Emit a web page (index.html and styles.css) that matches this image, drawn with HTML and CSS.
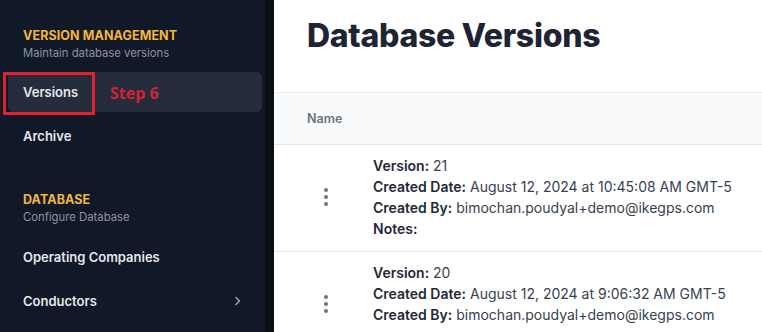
FILE: index.html
```html
<!DOCTYPE html>
<html lang="en">
<head>
    <meta charset="UTF-8">
    <meta name="viewport" content="width=device-width, initial-scale=1.0">
    <title>Database Versions</title>
    <link rel="stylesheet" href="styles.css">
</head>
<body>
    <div class="layout">
        <!-- Sidebar -->
        <aside class="sidebar">
            <div class="section">
                <div class="section-title">VERSION MANAGEMENT</div>
                <div class="section-sub">Maintain database versions</div>
                <ul class="nav">
                    <li class="nav-item active">
                        Versions
                        <span class="step-box"></span>
                        <span class="step-label">Step 6</span>
                    </li>
                    <li class="nav-item">Archive</li>
                </ul>
            </div>

            <div class="section section-db">
                <div class="section-title">DATABASE</div>
                <div class="section-sub">Configure Database</div>
                <ul class="nav">
                    <li class="nav-item">Operating Companies</li>
                    <li class="nav-item">
                        Conductors
                        <svg class="chevron" width="8" height="10" viewBox="0 0 8 10"><path d="M2 1.5 L5.5 5 L2 8.5" fill="none" stroke="#9ca3af" stroke-width="1.6" stroke-linecap="round" stroke-linejoin="round"/></svg>
                    </li>
                </ul>
            </div>
        </aside>
        <div class="divider"></div>

        <!-- Main content -->
        <main class="main">
            <h1 class="page-title">Database Versions</h1>

            <div class="table-head">Name</div>

            <div class="row">
                <div class="kebab"><span></span><span></span><span></span></div>
                <div class="details">
                    <div><b>Version:</b> 21</div>
                    <div><b>Created Date:</b> August 12, 2024 at 10:45:08 AM GMT-5</div>
                    <div><b>Created By:</b> bimochan.poudyal+demo@ikegps.com</div>
                    <div><b>Notes:</b></div>
                </div>
            </div>

            <div class="row">
                <div class="kebab"><span></span><span></span><span></span></div>
                <div class="details">
                    <div><b>Version:</b> 20</div>
                    <div><b>Created Date:</b> August 12, 2024 at 9:06:32 AM GMT-5</div>
                    <div><b>Created By:</b> bimochan.poudyal+demo@ikegps.com</div>
                </div>
            </div>
        </main>
    </div>
</body>
</html>
```

FILE: styles.css
```css
body {
    margin: 0;
    font-family: Inter, "Noto Sans", Arial, sans-serif;
    background-color: #ffffff;
    overflow: hidden;
}

.layout {
    display: flex;
    height: 332px;
    overflow: hidden;
}

/* Sidebar */
.sidebar {
    width: 265px;
    background-color: #111827;
    padding-top: 27px;
    box-sizing: border-box;
    flex-shrink: 0;
}

.divider {
    width: 9px;
    background-color: #0a0e17;
    flex-shrink: 0;
}

.section-title {
    padding-left: 23px;
    font-size: 12.5px;
    font-weight: 700;
    line-height: 18px;
    color: #f4b63a;
    letter-spacing: 0.1px;
}

.section-sub {
    padding-left: 23px;
    font-size: 11.3px;
    line-height: 16px;
    color: #8b93a1;
}

.section-db {
    margin-top: 35px;
}

.nav {
    list-style: none;
    margin: 11px 0 0 0;
    padding: 0;
}

.section-db .nav {
    margin-top: 12px;
}

.nav-item {
    position: relative;
    display: flex;
    align-items: center;
    height: 40px;
    margin: 0 3px 4px 8px;
    padding-left: 15px;
    padding-right: 20px;
    border-radius: 6px;
    font-size: 13px;
    font-weight: 600;
    color: #e5e7eb;
}

.nav-item.active {
    background-color: #252d3d;
}

.chevron {
    margin-left: auto;
}

/* Tutorial annotation over the active item */
.step-box {
    position: absolute;
    left: -5px;
    top: 0;
    width: 86px;
    height: 37px;
    border: 3px solid #e3202e;
}

.step-label {
    position: absolute;
    left: 102px;
    top: 10px;
    font-family: "Open Sans", "Noto Sans", sans-serif;
    font-size: 16px;
    font-weight: 700;
    color: #d42234;
}

/* Main */
.main {
    flex: 1;
    min-width: 0;
}

.page-title {
    margin: 0;
    height: 92px;
    box-sizing: border-box;
    padding: 15px 0 0 33px;
    font-size: 32px;
    line-height: 42px;
    font-weight: 800;
    color: #1e2433;
    letter-spacing: -0.3px;
}

.table-head {
    height: 53px;
    box-sizing: border-box;
    display: flex;
    align-items: center;
    padding-left: 33px;
    background-color: #f9fafb;
    border-top: 1px solid #eceef1;
    border-bottom: 1px solid #e5e7eb;
    font-size: 12.5px;
    font-weight: 600;
    color: #6b7280;
}

.row {
    display: flex;
    align-items: flex-start;
    min-height: 107px;
    box-sizing: border-box;
    padding: 10px 0 12px 0;
    border-bottom: 1px solid #e5e7eb;
}

.kebab {
    align-self: center;
    width: 99px;
    display: flex;
    flex-direction: column;
    align-items: center;
    gap: 3px;
    padding-left: 4px;
    box-sizing: border-box;
}

.kebab span {
    width: 4px;
    height: 4px;
    border-radius: 50%;
    background-color: #6b7280;
}

.details {
    font-size: 14px;
    line-height: 21px;
    color: #374151;
}

.details b {
    font-weight: 600;
    color: #1f2937;
}
```
